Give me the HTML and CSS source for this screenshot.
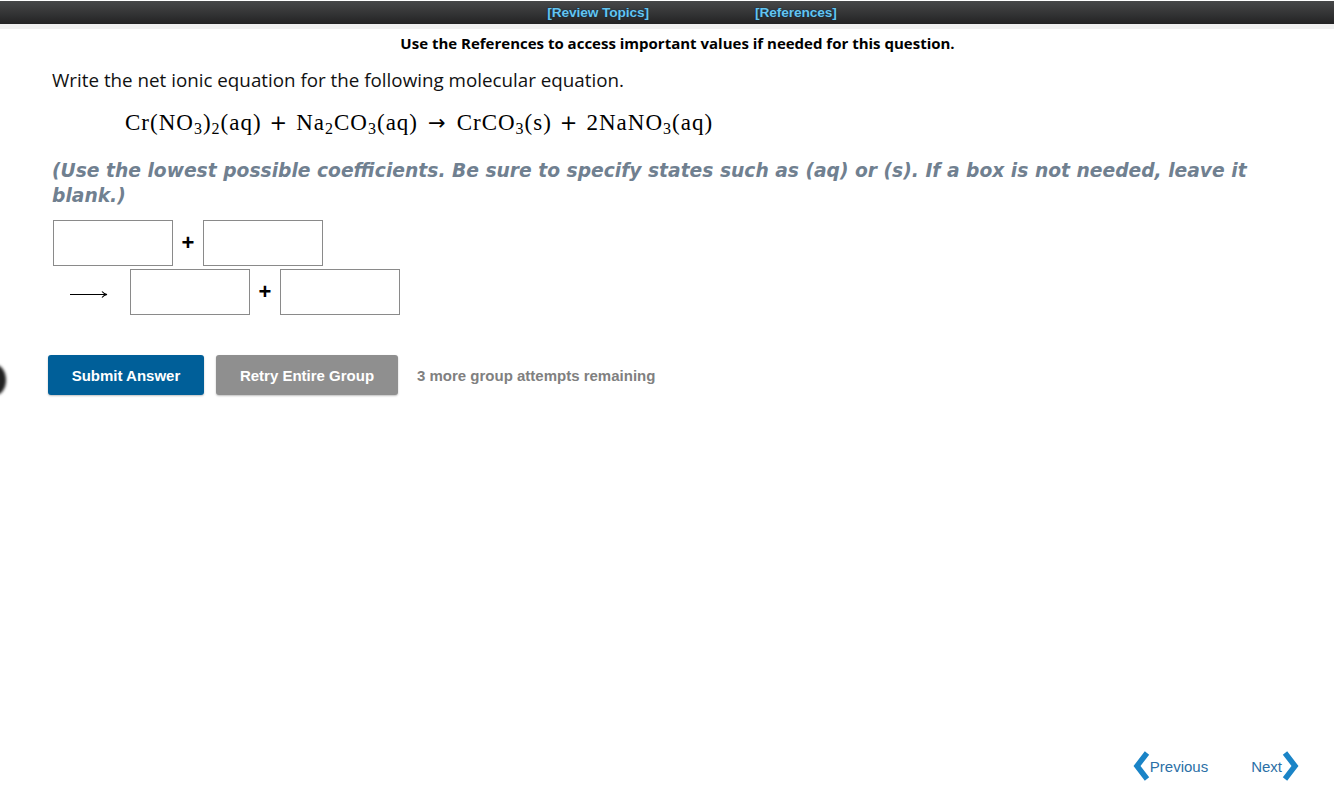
FILE: index.html
```html
<!DOCTYPE html>
<html>
<head>
<meta charset="utf-8">
<link rel="stylesheet" href="styles.css">
</head>
<body>
<div class="page">
  <div class="topbar">
    <a class="toplink">[Review Topics]</a>
    <a class="toplink">[References]</a>
  </div>
  <div class="strip"></div>
  <div class="note">Use the References to access important values if needed for this question.</div>

  <div class="content">
    <p class="question">Write the net ionic equation for the following molecular equation.</p>
    <div class="eq">Cr(NO<sub>3</sub>)<sub>2</sub>(aq)<span class="op">+</span>Na<sub>2</sub>CO<sub>3</sub>(aq)<span class="op arr">→</span>CrCO<sub>3</sub>(s)<span class="op">+</span>2NaNO<sub>3</sub>(aq)</div>
    <p class="hint">(Use the lowest possible coefficients. Be sure to specify states such as (aq) or (s). If a box is not needed, leave it blank.)</p>

    <div class="answer">
      <div class="row">
        <div class="box"></div><span class="plus">+</span><div class="box"></div>
      </div>
      <div class="row row2">
        <svg class="arrow" width="38" height="10" viewBox="0 0 38 10"><path d="M0 5.5H37M32 2.5Q34 5 37 5.5Q34 6 32 8.5" fill="none" stroke="#000" stroke-width="1.1"/></svg>
        <div class="box"></div><span class="plus">+</span><div class="box"></div>
      </div>
    </div>

    <div class="actions">
      <button class="btn btn-submit">Submit Answer</button>
      <button class="btn btn-retry">Retry Entire Group</button>
      <span class="attempts">3 more group attempts remaining</span>
    </div>
  </div>

  <div class="blob"></div>

  <div class="nav">
    <a class="navlink"><svg width="17" height="30" viewBox="0 0 17 30"><path d="M14 2L4 15L14 28" fill="none" stroke="#1a84c7" stroke-width="5.5" stroke-linejoin="miter"/></svg>Previous</a>
    <a class="navlink next">Next<svg width="17" height="30" viewBox="0 0 17 30"><path d="M3 2L13 15L3 28" fill="none" stroke="#1a84c7" stroke-width="5.5" stroke-linejoin="miter"/></svg></a>
  </div>
</div>
</body>
</html>
```
FILE: styles.css
```css
html, body {
  margin: 0;
  padding: 0;
  background: #fff;
}
.page {
  position: relative;
  min-height: 798px;
  display: flex;
  flex-direction: column;
  box-sizing: border-box;
  padding-top: 1px;
}
.topbar {
  height: 23px;
  width: 1334px;
  background: linear-gradient(#474849, #232324);
  display: flex;
  align-items: center;
  justify-content: center;
  gap: 106px;
  padding-left: 50px;
  box-sizing: border-box;
}
.toplink {
  font-family: "Liberation Sans", Arial, sans-serif;
  font-weight: bold;
  font-size: 13.7px;
  color: #66c4ef;
  text-shadow: 0 0 1px #0a2a40, 0 0 1px #0a2a40;
  letter-spacing: -0.1px;
}
.strip {
  height: 5px;
  width: 1334px;
  background: #f0f0f0;
}
.note {
  font-family: "Open Sans", "Noto Sans", sans-serif;
  font-weight: bold;
  font-size: 15px;
  text-align: center;
  padding-left: 18px;
  margin-top: 4px;
  line-height: 20px;
  color: #000;
}
.content {
  padding-left: 52px;
}
.question {
  margin: 14px 0 0;
  font-family: "Open Sans", "Noto Sans", sans-serif;
  font-size: 18.8px;
  line-height: 26px;
  color: #111;
}
.eq {
  margin: 16px 0 0 73px;
  font-family: "Liberation Serif", "DejaVu Serif", serif;
  font-size: 23px;
  line-height: 28px;
  color: #000;
  letter-spacing: 1px;
}
.eq sub {
  font-size: 16px;
  vertical-align: -4px;
  line-height: 0;
}
.eq .op {
  margin: 0 8px;
  font-family: "DejaVu Sans", sans-serif;
  font-size: 21px;
}
.eq .arr {
  margin: 0 10px;
}
.hint {
  margin: 21px 0 0;
  width: 1220px;
  font-family: "DejaVu Sans", Verdana, sans-serif;
  font-weight: bold;
  font-style: italic;
  font-size: 18.7px;
  line-height: 25px;
  color: #708090;
}
.answer {
  margin-top: 12px;
  display: flex;
  flex-direction: column;
  gap: 3px;
}
.row {
  display: flex;
  align-items: center;
  padding-left: 1px;
}
.row2 {
  padding-left: 18px;
}
.arrow {
  margin-right: 22px;
  margin-top: 4px;
}
.box {
  width: 118px;
  height: 44px;
  border: 1px solid #8a8a8a;
  background: #fff;
}
.plus {
  width: 30px;
  text-align: center;
  font-family: "Liberation Sans", Arial, sans-serif;
  font-weight: bold;
  font-size: 22px;
  color: #000;
}
.actions {
  margin-top: 40px;
  display: flex;
  align-items: center;
  margin-left: -4px;
}
.btn {
  height: 40px;
  border: none;
  border-radius: 3px;
  color: #fff;
  font-family: "Liberation Sans", Arial, sans-serif;
  font-weight: bold;
  font-size: 15px;
  padding: 0;
  box-shadow: 0 1px 2px rgba(0,0,0,0.25);
}
.btn-submit {
  width: 156px;
  background: #005f99;
}
.btn-retry {
  width: 182px;
  margin-left: 12px;
  background: #8f8f8f;
}
.attempts {
  margin-left: 19px;
  font-family: "Liberation Sans", Arial, sans-serif;
  font-weight: bold;
  font-size: 15px;
  color: #808080;
}
.blob {
  position: absolute;
  left: -14px;
  top: 365px;
  width: 20px;
  height: 30px;
  border-radius: 50%;
  background: #222;
  filter: blur(1.5px);
}
.nav {
  margin-top: auto;
  margin-bottom: 17px;
  display: flex;
  justify-content: flex-end;
  align-items: center;
  gap: 43px;
  padding-right: 38px;
}
.navlink {
  display: flex;
  align-items: center;
  font-family: "Liberation Sans", Arial, sans-serif;
  font-size: 15px;
  color: #2b70a6;
}
.navlink svg {
  display: block;
}
```
